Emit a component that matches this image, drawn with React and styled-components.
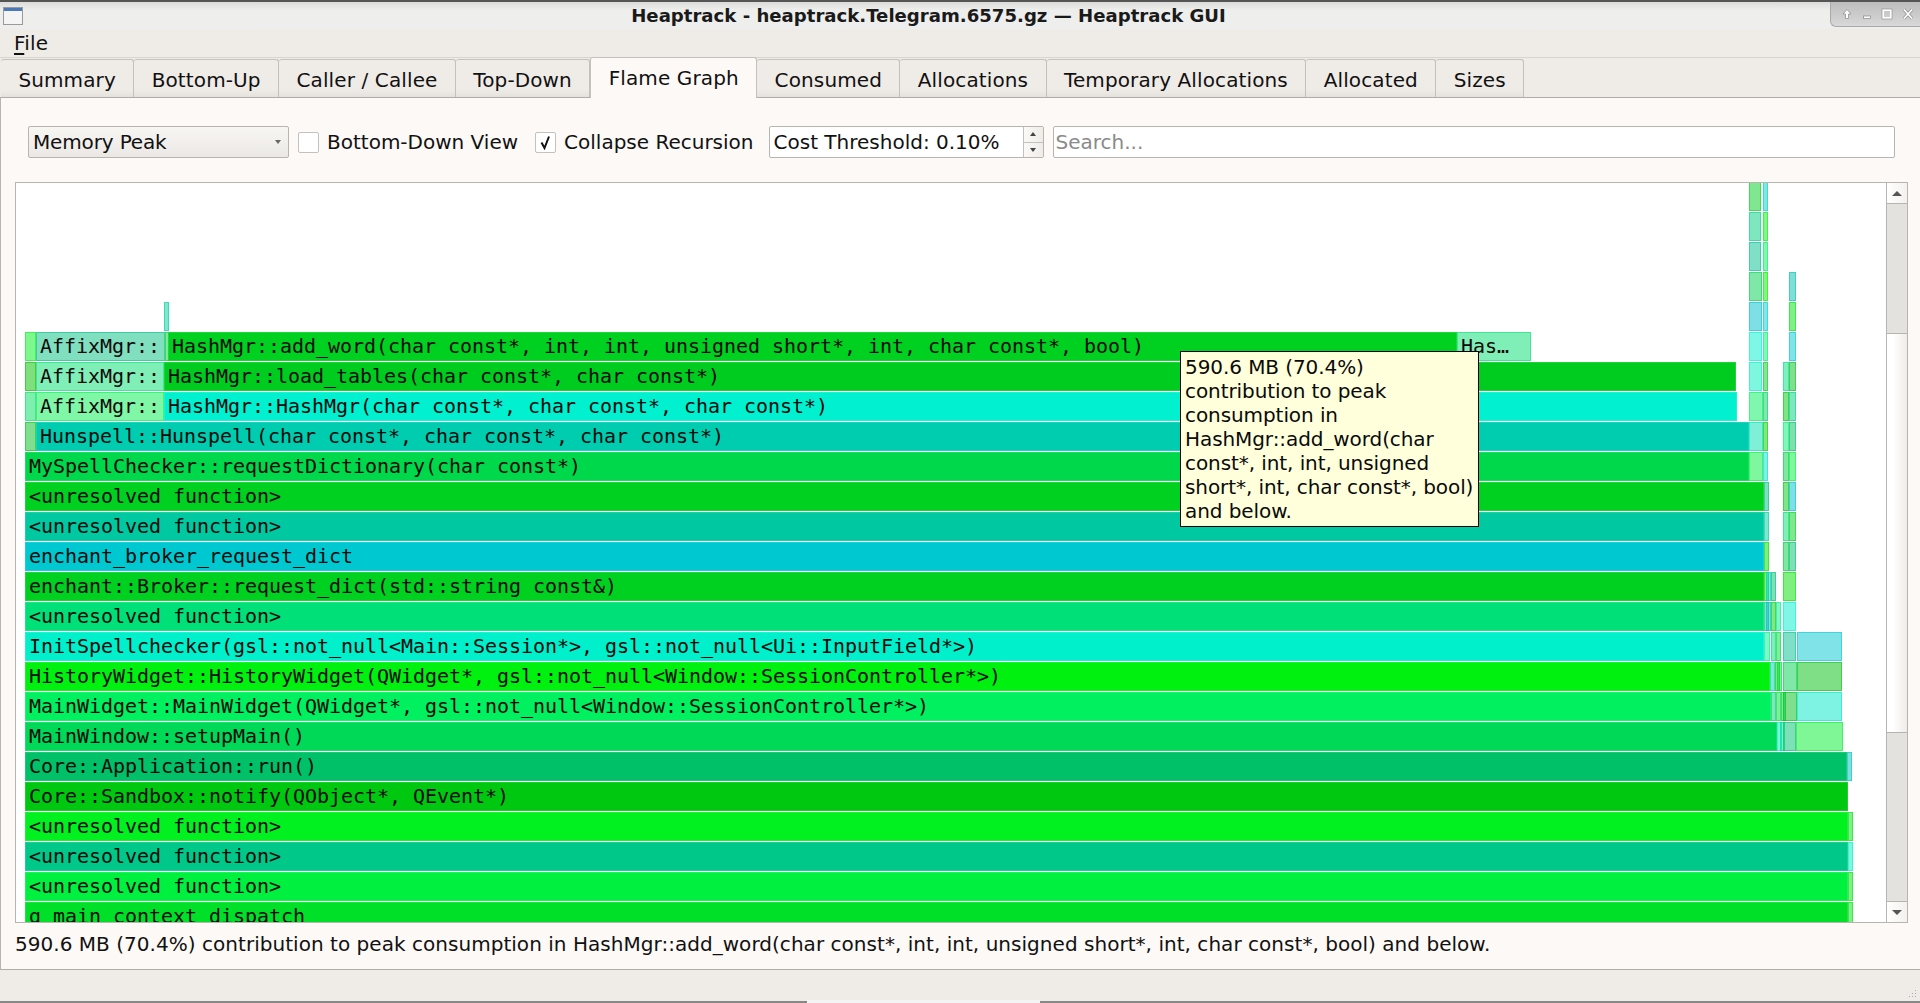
import React from 'react';
import styled, { createGlobalStyle } from 'styled-components';

const GlobalStyle = createGlobalStyle`
  html, body {
    margin: 0;
    height: 100%;
    overflow: hidden;
    background: #efebe7;
  }
  * {
    box-sizing: border-box;
  }
`;

const Window = styled.div`
  position: relative;
  display: flex;
  flex-direction: column;
  height: 1003px;
  font-family: 'DejaVu Sans', sans-serif;
  font-size: 20px;
  color: #111;
  background: #efebe7;
`;

const TitleBar = styled.div`
  position: relative;
  flex: none;
  height: 29px;
  display: flex;
  align-items: center;
  justify-content: center;
  padding-right: 63px;
  border-top: 2px solid #555;
  background: linear-gradient(#dcdcdb, #eeeeec 30%, #eeeeee);
  font-size: 18.1px;
  font-weight: bold;
  color: #1a1a1a;
`;

const AppIcon = styled.svg`
  position: absolute;
  left: 3px;
  top: 5px;
`;

const WindowButtons = styled.div`
  position: absolute;
  right: 0;
  top: 0;
  width: 90px;
  height: 25px;
  display: flex;
  align-items: center;
  justify-content: space-around;
  padding: 0 2px 0 6px;
  background: linear-gradient(#bdbdbd, #d8d8d8);
  border: 1px solid #aaa;
  border-top: none;
  border-right: none;
  border-bottom-left-radius: 6px;
`;

const MenuBar = styled.div`
  flex: none;
  height: 29px;
  padding: 0 14px;
  display: flex;
  align-items: center;
  letter-spacing: 0.2px;
  border-bottom: 1px solid #d8d4cf;
  u {
    text-underline-offset: 3px;
  }
`;

const TabBar = styled.div`
  flex: none;
  height: 40px;
  display: flex;
  align-items: flex-end;
  padding-left: 1px;
  border-bottom: 1px solid #b0aca8;
`;

const Tab = styled.div`
  position: relative;
  height: ${p => (p.$active ? '41px' : '38px')};
  margin-bottom: ${p => (p.$active ? '-1px' : '0')};
  padding: ${p => (p.$active ? '0 17.4px 1px' : '2px 17.4px 0')};
  display: flex;
  align-items: center;
  white-space: nowrap;
  letter-spacing: 0.12px;
  background: ${p =>
    p.$active ? '#fdf9f6' : 'linear-gradient(#efebe7, #efebe7 80%, #e5e2de)'};
  border: 1px solid #c4c0bb;
  border-bottom: none;
  border-left: ${p => (p.$active ? '1px solid #c4c0bb' : 'none')};
  border-radius: 3px 3px 0 0;
`;

const Panel = styled.div`
  flex: none;
  height: 872px;
  display: flex;
  flex-direction: column;
  padding: 28px 12px 0 14px;
  background: #fdf9f6;
  border-left: 1px solid #b8b4b0;
  border-bottom: 1px solid #b0aca8;
`;

const Toolbar = styled.div`
  height: 32px;
  margin-left: 13px;
  display: flex;
  align-items: center;
`;

const Combo = styled.div`
  width: 261px;
  height: 32px;
  padding: 0 7px 0 4px;
  display: flex;
  align-items: center;
  justify-content: space-between;
  letter-spacing: -0.15px;
  background: linear-gradient(#f8f6f3, #ebe8e4);
  border: 1px solid #b8b4b0;
  border-radius: 2px;
`;

const ComboArrow = styled.span`
  width: 0;
  height: 0;
  border-left: 3.5px solid transparent;
  border-right: 3.5px solid transparent;
  border-top: 4px solid #666;
`;

const CheckLabel = styled.label`
  display: flex;
  align-items: center;
  gap: 8px;
  margin-left: ${p => p.$gap}px;
  white-space: nowrap;
`;

const CheckBox = styled.span`
  width: 21px;
  height: 21px;
  display: flex;
  align-items: center;
  justify-content: center;
  background: #fff;
  border: 1px solid #c4c0bb;
  border-radius: 2px;
`;

const SpinBox = styled.div`
  width: 275px;
  height: 32px;
  margin-left: 15px;
  display: flex;
  align-items: center;
  justify-content: space-between;
  padding-left: 4px;
  background: #fff;
  border: 1px solid #b8b4b0;
  border-radius: 2px;
`;

const SpinButtons = styled.div`
  width: 20px;
  height: 100%;
  display: flex;
  flex-direction: column;
  background: linear-gradient(90deg, #fbf9f7, #efece8);
  border-left: 1px solid #c4c0bb;
`;

const SpinButton = styled.span`
  flex: 1;
  display: flex;
  align-items: center;
  justify-content: center;
  border-top: ${p => (p.$lower ? '1px solid #c4c0bb' : 'none')};
  &::after {
    content: '';
    border-left: 3.5px solid transparent;
    border-right: 3.5px solid transparent;
    ${p =>
      p.$lower
        ? 'border-top: 4px solid #444;'
        : 'border-bottom: 4px solid #444;'}
  }
`;

const SearchInput = styled.div`
  width: 842px;
  height: 32px;
  margin-left: 9px;
  padding-left: 2px;
  display: flex;
  align-items: center;
  color: #8a8a8a;
  background: #fff;
  border: 1px solid #b8b4b0;
  border-radius: 2px;
`;

const GraphBox = styled.div`
  position: relative;
  width: 1893px;
  height: 741px;
  margin-top: 24px;
  display: flex;
  background: #fff;
  border: 1px solid #b8b4b0;
`;

const Viewport = styled.div`
  flex: 1;
  min-width: 0;
  overflow: hidden;
`;

const Rows = styled.div`
  margin-top: -1px;
`;

const FlameRow = styled.div`
  position: relative;
  height: 30px;
`;

const Frame = styled.div`
  position: absolute;
  top: 0;
  height: 29px;
  padding-left: 3px;
  overflow: hidden;
  white-space: pre;
  font-family: 'DejaVu Sans Mono', monospace;
  font-size: 20px;
  letter-spacing: -0.04px;
  line-height: 26.5px;
  color: #0a0a0a;
  background: ${p => (p.$dim ? `${p.$color}80` : p.$color)};
  border: 1px solid ${p => (p.$dim ? `${p.$color}80` : 'rgba(255,255,255,.12)')};
`;

const Scrollbar = styled.div`
  flex: none;
  width: 21px;
  display: flex;
  flex-direction: column;
  border-left: 1px solid #b8b4b0;
  background: #e3e2df;
`;

const ScrollButton = styled.div`
  flex: none;
  height: 21px;
  display: flex;
  align-items: center;
  justify-content: center;
  background: linear-gradient(90deg, #fff, #f3f1ee);
  border-${p => (p.$down ? 'top' : 'bottom')}: 1px solid #b8b4b0;
  &::after {
    content: '';
    border-left: 5px solid transparent;
    border-right: 5px solid transparent;
    ${p =>
      p.$down
        ? 'border-top: 5px solid #555;'
        : 'border-bottom: 5px solid #555;'}
  }
`;

const ScrollGroove = styled.div`
  flex: ${p => p.$size} 0 0;
`;

const ScrollHandle = styled.div`
  flex: none;
  height: 400px;
  background: linear-gradient(90deg, #fff 30%, #efece8);
  border-top: 1px solid #b8b4b0;
  border-bottom: 1px solid #b8b4b0;
`;

const StatusText = styled.div`
  height: 46px;
  display: flex;
  align-items: center;
  padding-bottom: 4px;
  letter-spacing: 0.035px;
  white-space: nowrap;
`;

const StatusBar = styled.div`
  flex: 1;
  display: flex;
  align-items: flex-end;
  border-bottom: 2px solid #8a8886;
`;

const DockPeek = styled.div`
  position: absolute;
  left: 807px;
  bottom: 0;
  width: 233px;
  height: 3px;
  background: #f4f4f4;
`;

const Grip = styled.svg`
  position: absolute;
  right: 2px;
  bottom: 4px;
`;

const Tooltip = styled.div`
  position: absolute;
  left: 1180px;
  top: 351px;
  width: 299px;
  height: 176px;
  padding: 3px 0 0 4px;
  background: #ffffdc;
  border: 1px solid #000;
  line-height: 24px;
  letter-spacing: -0.08px;
  color: #0a0a0a;
  white-space: nowrap;
`;

const TABS = [
  'Summary',
  'Bottom-Up',
  'Caller / Callee',
  'Top-Down',
  'Flame Graph',
  'Consumed',
  'Allocations',
  'Temporary Allocations',
  'Allocated',
  'Sizes',
];

const UNRESOLVED = '<unresolved function>';

// d = dimmed frame, m = main frame from the left edge, f = full frame
const d = (x0, x1, color, text) => ({ x0, x1, color, text, dim: true });
const m = (x1, color, text) => ({ x0: 25, x1, color, text });
const f = (x0, x1, color, text) => ({ x0, x1, color, text });

const ROWS = [
  [d(1749, 1761, '#00d020'), d(1763, 1766, '#00d0c0')],
  [d(1749, 1761, '#00d080'), d(1763, 1767, '#00f010')],
  [d(1749, 1761, '#00c090'), d(1763, 1767, '#00f060')],
  [d(1749, 1762, '#00d050'), d(1763, 1767, '#00f000'), d(1789, 1796, '#00c0b0')],
  [d(164, 168, '#00d0a0'), d(1749, 1762, '#00c0d0'), d(1763, 1767, '#00d0d0'), d(1789, 1796, '#00e010')],
  [
    d(25, 36, '#00f020'),
    d(36, 165, '#00c080', 'AffixMgr::'),
    d(165, 168, '#00d030'),
    f(168, 1457, '#00d020', 'HashMgr::add_word(char const*, int, int, unsigned short*, int, char const*, bool)'),
    d(1457, 1531, '#00e070', 'Has…'),
    d(1749, 1762, '#00f0d0'),
    d(1763, 1767, '#00f070'),
    d(1789, 1796, '#00c8d0'),
  ],
  [
    d(25, 36, '#00c000'),
    d(36, 164, '#00e070', 'AffixMgr::'),
    f(164, 1736, '#00cc20', 'HashMgr::load_tables(char const*, char const*)'),
    d(1749, 1762, '#00f0c0'),
    d(1763, 1767, '#00d020'),
    d(1783, 1789, '#00e080'),
    d(1789, 1796, '#00c020'),
  ],
  [
    d(25, 36, '#00e060'),
    d(36, 164, '#00f050', 'AffixMgr::'),
    f(164, 1737, '#00f0d0', 'HashMgr::HashMgr(char const*, char const*, char const*)'),
    d(1749, 1763, '#00f060'),
    d(1763, 1767, '#00d060'),
    d(1783, 1789, '#00c810'),
    d(1789, 1796, '#00d080'),
  ],
  [
    d(25, 36, '#00c020'),
    f(36, 1749, '#00ccb0', 'Hunspell::Hunspell(char const*, char const*, char const*)'),
    d(1749, 1763, '#00e0b0'),
    d(1763, 1767, '#00d000'),
    d(1783, 1789, '#00f070'),
    d(1789, 1796, '#00c060'),
  ],
  [
    m(1749, '#00d84c', 'MySpellChecker::requestDictionary(char const*)'),
    d(1749, 1763, '#00f040'),
    d(1763, 1767, '#00e0d0'),
    d(1783, 1789, '#00d040'),
    d(1789, 1796, '#00f040'),
  ],
  [m(1764, '#00d020', UNRESOLVED), d(1764, 1767, '#00c080'), d(1783, 1789, '#00c810'), d(1789, 1796, '#00c0d0')],
  [m(1764, '#00c8a0', UNRESOLVED), d(1764, 1767, '#00d0a0'), d(1783, 1789, '#00e070'), d(1789, 1796, '#00d020')],
  [m(1764, '#00c8d0', 'enchant_broker_request_dict'), d(1764, 1767, '#00e000'), d(1783, 1789, '#00d040'), d(1789, 1796, '#00c070')],
  [
    m(1764, '#00d020', 'enchant::Broker::request_dict(std::string const&)'),
    d(1764, 1766, '#00e000'),
    d(1766, 1770, '#00d0d0'),
    d(1771, 1774, '#00c070'),
    d(1783, 1796, '#00e000'),
  ],
  [
    m(1764, '#00e078', UNRESOLVED),
    d(1764, 1766, '#00d080'),
    d(1766, 1770, '#00c0d0'),
    d(1771, 1774, '#00d010'),
    d(1776, 1781, '#00f090'),
    d(1783, 1796, '#00f0d0'),
  ],
  [
    m(1764, '#00f0cc', 'InitSpellchecker(gsl::not_null<Main::Session*>, gsl::not_null<Ui::InputField*>)'),
    d(1764, 1770, '#00f090'),
    d(1771, 1776, '#00e070'),
    d(1776, 1781, '#00e040'),
    d(1783, 1796, '#00c090'),
    d(1797, 1842, '#00c8d0'),
  ],
  [
    m(1770, '#00f010', 'HistoryWidget::HistoryWidget(QWidget*, gsl::not_null<Window::SessionController*>)'),
    d(1770, 1775, '#00d0b0'),
    d(1775, 1777, '#00d000'),
    d(1777, 1781, '#00e040'),
    d(1783, 1797, '#00d050'),
    d(1797, 1842, '#00c010'),
  ],
  [
    m(1771, '#00f060', 'MainWidget::MainWidget(QWidget*, gsl::not_null<Window::SessionController*>)'),
    d(1771, 1776, '#00d070'),
    d(1776, 1781, '#00e040'),
    d(1781, 1783, '#00d030'),
    d(1783, 1797, '#00c020'),
    d(1797, 1842, '#00e8c8'),
  ],
  [
    m(1777, '#00d858', 'MainWindow::setupMain()'),
    d(1777, 1780, '#00f0c0'),
    d(1780, 1783, '#00e090'),
    d(1783, 1796, '#00c070'),
    d(1796, 1843, '#00f030'),
  ],
  [m(1847, '#00c068', 'Core::Application::run()'), d(1847, 1849, '#00c0c0')],
  [m(1848, '#00c810', 'Core::Sandbox::notify(QObject*, QEvent*)')],
  [m(1848, '#00f020', UNRESOLVED), d(1848, 1851, '#00e010')],
  [m(1848, '#00c888', UNRESOLVED), d(1848, 1851, '#00f0c0')],
  [m(1848, '#00f040', UNRESOLVED), d(1848, 1851, '#00e010')],
  [m(1848, '#00e028', 'g_main_context_dispatch'), d(1848, 1851, '#00e010')],
];

// the viewport content starts at x=16 in the window
const VIEW_LEFT = 16;

const App = () => (
  <Window>
    <GlobalStyle />
    <TitleBar>
      <AppIcon width="21" height="19" viewBox="0 0 21 19">
        <rect x="0.5" y="0.5" width="19" height="17" fill="#f4f4f4" stroke="#9a9a9a" />
        <rect x="1" y="1" width="18" height="3" fill="#4a78b8" />
      </AppIcon>
      Heaptrack - heaptrack.Telegram.6575.gz — Heaptrack GUI
      <WindowButtons>
        <svg width="12" height="12" viewBox="0 0 12 12">
          <path d="M6 1.5 L10 6 H7.5 V10.5 H4.5 V6 H2 Z" fill="#fff" stroke="#888" strokeWidth="0.7" />
        </svg>
        <svg width="10" height="12" viewBox="0 0 10 12">
          <rect x="1.5" y="8" width="7" height="2.5" fill="#fff" stroke="#888" strokeWidth="0.7" />
        </svg>
        <svg width="12" height="12" viewBox="0 0 12 12">
          <rect x="2" y="2" width="8" height="8" fill="none" stroke="#fff" strokeWidth="2" />
          <rect x="1" y="1" width="10" height="10" fill="none" stroke="#888" strokeWidth="0.6" />
        </svg>
        <svg width="12" height="12" viewBox="0 0 12 12">
          <path d="M2 1.5 L10 10.5 M10 1.5 L2 10.5" stroke="#888" strokeWidth="3" />
          <path d="M2 1.5 L10 10.5 M10 1.5 L2 10.5" stroke="#fff" strokeWidth="1.8" />
        </svg>
      </WindowButtons>
    </TitleBar>
    <MenuBar>
      <span>
        <u>F</u>ile
      </span>
    </MenuBar>
    <TabBar>
      {TABS.map(t => (
        <Tab key={t} $active={t === 'Flame Graph'}>
          {t}
        </Tab>
      ))}
    </TabBar>
    <Panel>
      <Toolbar>
        <Combo>
          Memory Peak
          <ComboArrow />
        </Combo>
        <CheckLabel $gap={9}>
          <CheckBox />
          Bottom-Down View
        </CheckLabel>
        <CheckLabel $gap={17}>
          <CheckBox>
            <svg width="13" height="15" viewBox="0 0 13 15">
              <path d="M2.5 7.5 L5.5 13 L10 1.5" fill="none" stroke="#111" strokeWidth="2" />
            </svg>
          </CheckBox>
          Collapse Recursion
        </CheckLabel>
        <SpinBox>
          Cost Threshold: 0.10%
          <SpinButtons>
            <SpinButton />
            <SpinButton $lower />
          </SpinButtons>
        </SpinBox>
        <SearchInput>Search...</SearchInput>
      </Toolbar>
      <GraphBox>
        <Viewport>
          <Rows>
            {ROWS.map((frames, i) => (
              <FlameRow key={i}>
                {frames.map(fr => (
                  <Frame
                    key={fr.x0}
                    $color={fr.color}
                    $dim={fr.dim}
                    style={{ left: fr.x0 - VIEW_LEFT, width: fr.x1 - fr.x0 }}
                  >
                    {fr.text}
                  </Frame>
                ))}
              </FlameRow>
            ))}
          </Rows>
        </Viewport>
        <Scrollbar>
          <ScrollButton />
          <ScrollGroove $size={129} />
          <ScrollHandle />
          <ScrollGroove $size={169} />
          <ScrollButton $down />
        </Scrollbar>
      </GraphBox>
      <StatusText>
        590.6 MB (70.4%) contribution to peak consumption in HashMgr::add_word(char const*, int, int, unsigned short*, int, char const*, bool) and below.
      </StatusText>
    </Panel>
    <StatusBar />
    <Grip width="10" height="10" viewBox="0 0 10 10">
      <path d="M7 1h1v1H7zM4 4h1v1H4zM7 4h1v1H7zM1 7h1v1H1zM4 7h1v1H4zM7 7h1v1H7z" fill="#aaa" />
    </Grip>
    <DockPeek />
    <Tooltip>
      590.6 MB (70.4%)
      <br />
      contribution to peak
      <br />
      consumption in
      <br />
      HashMgr::add_word(char
      <br />
      const*, int, int, unsigned
      <br />
      short*, int, char const*, bool)
      <br />
      and below.
    </Tooltip>
  </Window>
);

export default App;
